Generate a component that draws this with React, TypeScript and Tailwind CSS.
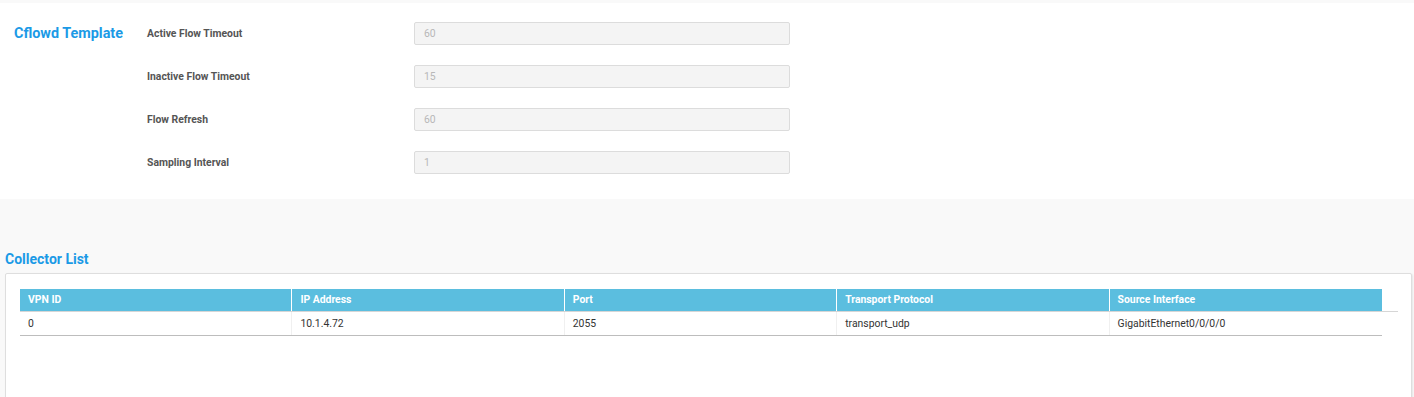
export default function App() {
  const fields = [
    { label: "Active Flow Timeout", value: "60" },
    { label: "Inactive Flow Timeout", value: "15" },
    { label: "Flow Refresh", value: "60" },
    { label: "Sampling Interval", value: "1" },
  ];
  const cols = ["VPN ID", "IP Address", "Port", "Transport Protocol", "Source Interface"];
  const row = ["0", "10.1.4.72", "2055", "transport_udp", "GigabitEthernet0/0/0/0"];

  return (
    <div className="w-[1414px] h-[397px] overflow-hidden bg-[#f9f9f9] pt-[3px] font-['Roboto',sans-serif]">
      {/* Cflowd Template */}
      <div className="flex bg-white h-[196px] pt-[19px]">
        <div className="w-[147px] pl-[14px] pt-[1px] text-[14.4px] font-bold text-[#1b9ae6] leading-[22px]">
          Cflowd Template
        </div>
        <div className="flex flex-col gap-[20px]">
          {fields.map((f) => (
            <div key={f.label} className="flex items-center h-[23px]">
              <div className="w-[267px] text-[10.4px] font-bold text-[#555]">{f.label}</div>
              <div className="w-[376px] h-[23px] flex items-center pl-[9px] bg-[#f4f4f4] border border-[#dcdcdc] rounded-[2px] text-[10.4px] text-[#b8b8b8]">
                {f.value}
              </div>
            </div>
          ))}
        </div>
      </div>

      {/* Collector List */}
      <div className="pt-[51px] pl-[5px] pr-[2px]">
        <div className="text-[14px] font-bold text-[#1b9ae6] leading-[18px] mb-[5px]">Collector List</div>
        <div className="bg-white border border-[#dedede] rounded-[2px] shadow-[1px_1px_2px_rgba(0,0,0,0.08)] h-[130px] pt-[15px] pl-[14px] pr-[16px]">
          <div className="w-[1378px]">
            <div className="flex h-[23px] border-b border-[#d6d6d6]">
              {cols.map((c, i) => (
                <div
                  key={c}
                  className={`w-[272.4px] h-full bg-[#5bbedf] text-white text-[10.4px] font-bold flex items-center pl-[8px] ${i < 4 ? "border-r border-white" : ""}`}
                >
                  {c}
                </div>
              ))}
            </div>
            <div className="flex w-[1362px] h-[24px] border-b border-[#bdbdbd]">
              {row.map((v, i) => (
                <div
                  key={i}
                  className={`w-[272.4px] h-full text-[#333] text-[10.4px] flex items-center pl-[8px] ${i < 4 ? "border-r border-[#f0f0f0]" : ""}`}
                >
                  {v}
                </div>
              ))}
            </div>
          </div>
        </div>
      </div>
    </div>
  );
}
